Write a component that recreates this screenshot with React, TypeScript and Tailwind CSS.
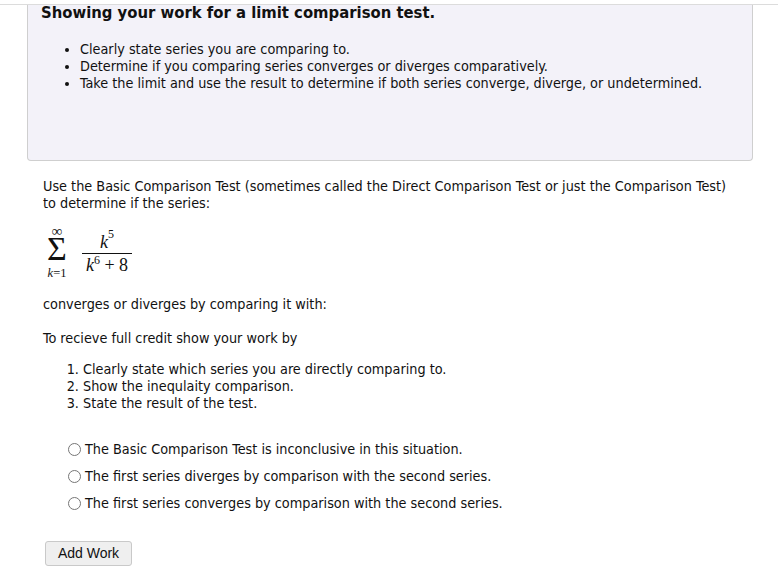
import React from "react";

const font = { fontFamily: '"DejaVu Sans Condensed", "DejaVu Sans", sans-serif' };
const serif = { fontFamily: '"Liberation Serif", "DejaVu Serif", serif' };

function Radio() {
  return (
    <span className="inline-block w-[13px] h-[13px] rounded-full border border-[#767676] bg-white mr-[4px] shrink-0" />
  );
}

export default function App() {
  return (
    <div className="w-[778px] h-[570px] bg-white text-[#111] overflow-hidden relative" style={font}>
      <div className="h-[4px]" />
      <div className="border-t border-[#dcdcdc]">
        <div className="ml-[27px] w-[726px] h-[156px] bg-[#f3f2f9] border-x border-b border-[#cfcfcf] rounded-b-[4px]">
          <div className="pl-[13px] pt-0 text-[16.5px] font-bold leading-[15px]">Showing your work for a limit comparison test.</div>
          <ul className="list-disc pl-[52px] mt-[21px] text-[14.3px] leading-[17px]">
            <li>Clearly state series you are comparing to.</li>
            <li>Determine if you comparing series converges or diverges comparatively.</li>
            <li>Take the limit and use the result to determine if both series converge, diverge, or undetermined.</li>
          </ul>
        </div>
      </div>
      <div className="pl-[43px] pt-[17px] text-[14.3px] leading-[17px]">
        <p className="pr-[40px]">Use the Basic Comparison Test (sometimes called the Direct Comparison Test or just the Comparison Test) to determine if the series:</p>
        <div className="flex items-center mt-[15px] h-[53px] text-[#111]" style={serif}>
          <div className="relative ml-[2px] w-[24px] h-[53px]">
            <span className="absolute left-1/2 -translate-x-1/2 -top-[2px] text-[15px] leading-[12px]">∞</span>
            <span className="absolute left-1/2 -translate-x-1/2 top-[7px] text-[34px] leading-[30px]">Σ</span>
            <span className="absolute left-1/2 -translate-x-1/2 top-[39px] text-[12.5px] leading-[14px] whitespace-nowrap"><i>k</i>=1</span>
          </div>
          <div className="flex flex-col items-center ml-[13px]">
            <span className="h-[22px] flex items-end text-[18px] leading-[19px] pb-[1px]">
              <i>k</i><span className="text-[12px] relative -top-[8px]">5</span>
            </span>
            <span className="block w-[50px] border-t border-[#111]" />
            <span className="h-[22px] text-[18px] leading-[21px] pt-[1px] whitespace-nowrap">
              <i>k</i><span className="text-[12px] relative -top-[7px]">6</span> + 8
            </span>
          </div>
        </div>
        <p className="mt-[16px]">converges or diverges by comparing it with:</p>
        <p className="mt-[17px]">To recieve full credit show your work by</p>
        <ol className="list-decimal pl-[40px] mt-[14px]">
          <li>Clearly state which series you are directly comparing to.</li>
          <li>Show the inequlaity comparison.</li>
          <li>State the result of the test.</li>
        </ol>
        <div className="mt-[29px] pl-[25px] flex flex-col gap-[10px]">
          <label className="flex items-center h-[17px]"><Radio />The Basic Comparison Test is inconclusive in this situation.</label>
          <label className="flex items-center h-[17px]"><Radio />The first series diverges by comparison with the second series.</label>
          <label className="flex items-center h-[17px]"><Radio />The first series converges by comparison with the second series.</label>
        </div>
        <button className="block mt-[29px] ml-[2px] w-[87px] h-[25px] bg-[#efefef] border border-[#c9c9c9] rounded-[3px] text-[14px] text-[#111]" style={{ fontFamily: '"Liberation Sans", Arial, sans-serif' }}>Add Work</button>
      </div>
    </div>
  );
}
